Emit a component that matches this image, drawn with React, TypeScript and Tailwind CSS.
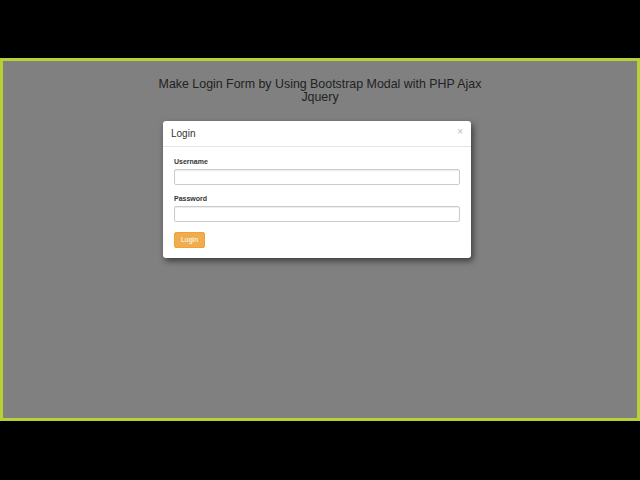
export default function App() {
  return (
    <div className="w-[640px] h-[480px] bg-black flex flex-col" style={{ fontFamily: '"Liberation Sans", Arial, sans-serif' }}>
      <div className="h-[58px]" />
      <div className="h-[363px] border-[3px] border-[#b4d236] bg-[#808080] flex flex-col">
        <h1 className="mt-[17px] text-center text-[12.4px] leading-[13px] text-[#222]">
          Make Login Form by Using Bootstrap Modal with PHP Ajax
          <br />
          Jquery
        </h1>
        <div className="ml-[160px] mt-[17px] w-[308px] bg-white rounded-[3px] shadow-[2px_3px_6px_rgba(0,0,0,0.55)]">
          <div className="h-[26px] px-[8px] flex items-center justify-between border-b border-[#e5e5e5]">
            <span className="text-[10px] text-[#333]">Login</span>
            <span className="text-[10px] text-[#bbb] leading-none mb-[3px]">×</span>
          </div>
          <div className="px-[11px] pt-[11px] pb-[10px] flex flex-col">
            <label className="text-[7px] font-bold text-[#333] leading-[8px]">Username</label>
            <div className="mt-[3px] h-[16px] border border-[#ccc] rounded-[2px] shadow-[inset_0_1px_1px_rgba(0,0,0,0.08)]" />
            <label className="mt-[10px] text-[7px] font-bold text-[#333] leading-[8px]">Password</label>
            <div className="mt-[3px] h-[16px] border border-[#ccc] rounded-[2px] shadow-[inset_0_1px_1px_rgba(0,0,0,0.08)]" />
            <button className="mt-[10px] w-[31px] h-[16px] bg-[#f0ad4e] border border-[#eea236] rounded-[2px] text-white text-[7px] flex items-center justify-center">
              Login
            </button>
          </div>
        </div>
      </div>
    </div>
  );
}
